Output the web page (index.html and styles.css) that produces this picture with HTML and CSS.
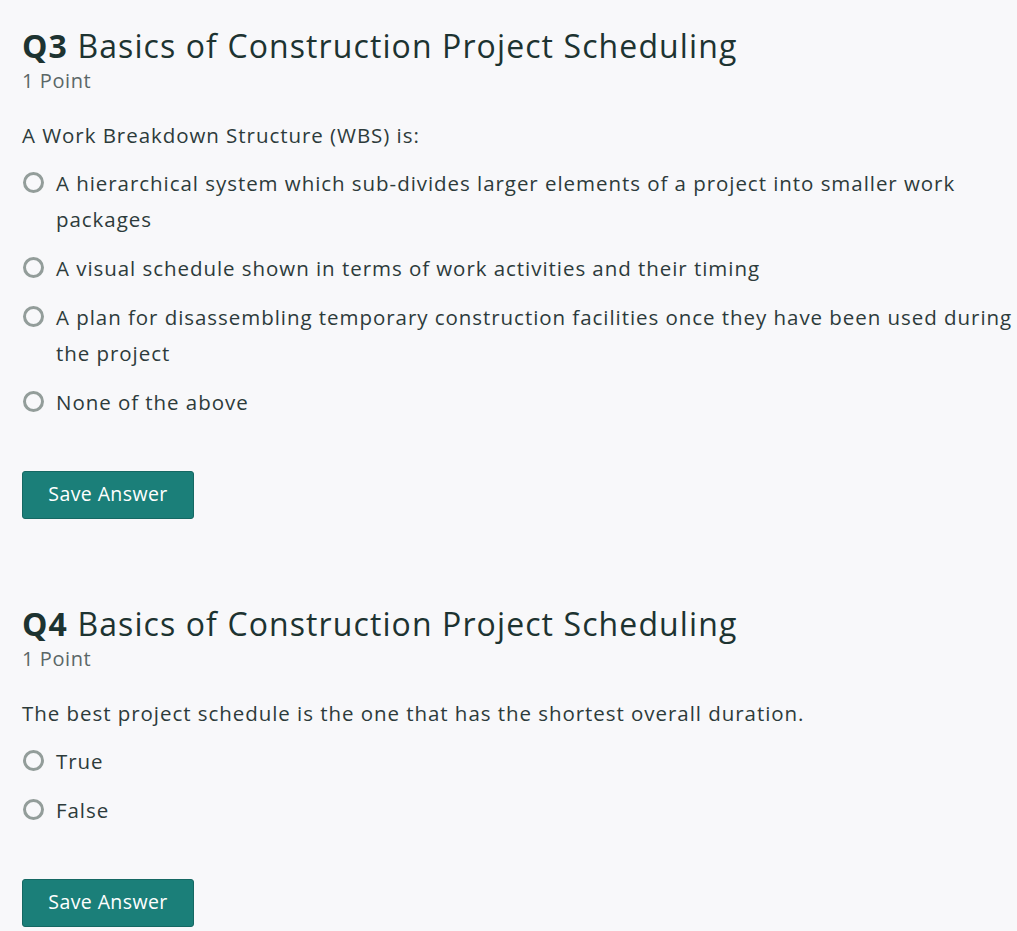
FILE: index.html
```html
<!DOCTYPE html>
<html>
<head>
<meta charset="utf-8">
<link rel="stylesheet" href="styles.css">
</head>
<body>
<div class="page">
  <section class="question">
    <h2 class="q-title"><strong>Q3</strong> Basics of Construction Project Scheduling</h2>
    <div class="points">1 Point</div>
    <p class="prompt">A Work Breakdown Structure (WBS) is:</p>
    <ul class="options">
      <li class="option"><span class="radio"></span><span class="label">A hierarchical system which sub-divides larger elements of a project into smaller work packages</span></li>
      <li class="option"><span class="radio"></span><span class="label">A visual schedule shown in terms of work activities and their timing</span></li>
      <li class="option"><span class="radio"></span><span class="label">A plan for disassembling temporary construction facilities once they have been used during the project</span></li>
      <li class="option"><span class="radio"></span><span class="label">None of the above</span></li>
    </ul>
    <button class="save">Save Answer</button>
  </section>
  <section class="question">
    <h2 class="q-title"><strong>Q4</strong> Basics of Construction Project Scheduling</h2>
    <div class="points">1 Point</div>
    <p class="prompt">The best project schedule is the one that has the shortest overall duration.</p>
    <ul class="options">
      <li class="option"><span class="radio"></span><span class="label">True</span></li>
      <li class="option"><span class="radio"></span><span class="label">False</span></li>
    </ul>
    <button class="save">Save Answer</button>
  </section>
</div>
</body>
</html>
```
FILE: styles.css
```css
html, body {
  margin: 0;
  padding: 0;
  background: #f8f8fa;
}
body {
  font-family: "Open Sans", "Liberation Sans", sans-serif;
  color: #2d3b3b;
}
.page {
  padding: 25px 0 0 22px;
}
.question + .question {
  margin-top: 84px;
}
.q-title {
  margin: 0;
  font-size: 32px;
  font-weight: 400;
  line-height: 42px;
  letter-spacing: 1.1px;
  color: #1d3331;
}
.q-title strong {
  font-weight: 700;
}
.points {
  font-size: 20px;
  line-height: 28px;
  letter-spacing: 0.6px;
  color: #5b6767;
}
.prompt {
  margin: 25px 0 0;
  font-size: 20.5px;
  line-height: 30px;
  letter-spacing: 0.95px;
}
.options {
  list-style: none;
  margin: 15px 0 0;
  padding: 0;
}
.option {
  display: flex;
  align-items: flex-start;
  gap: 12px;
  font-size: 20.5px;
  line-height: 36px;
  letter-spacing: 0.95px;
  margin-bottom: 13px;
}
.radio {
  flex: none;
  width: 15px;
  height: 15px;
  border: 3px solid #939d9a;
  border-radius: 50%;
  margin-top: 7px;
  margin-left: 1px;
}
.label {
  flex: 1;
}
.save {
  margin-top: 51px;
  display: block;
  width: 172px;
  height: 48px;
  padding: 0 0 4px;
  background: #1b7f79;
  color: #fff;
  border: 1px solid #156863;
  border-radius: 3px;
  font-family: inherit;
  font-size: 19.5px;
  letter-spacing: 0.4px;
}
```
